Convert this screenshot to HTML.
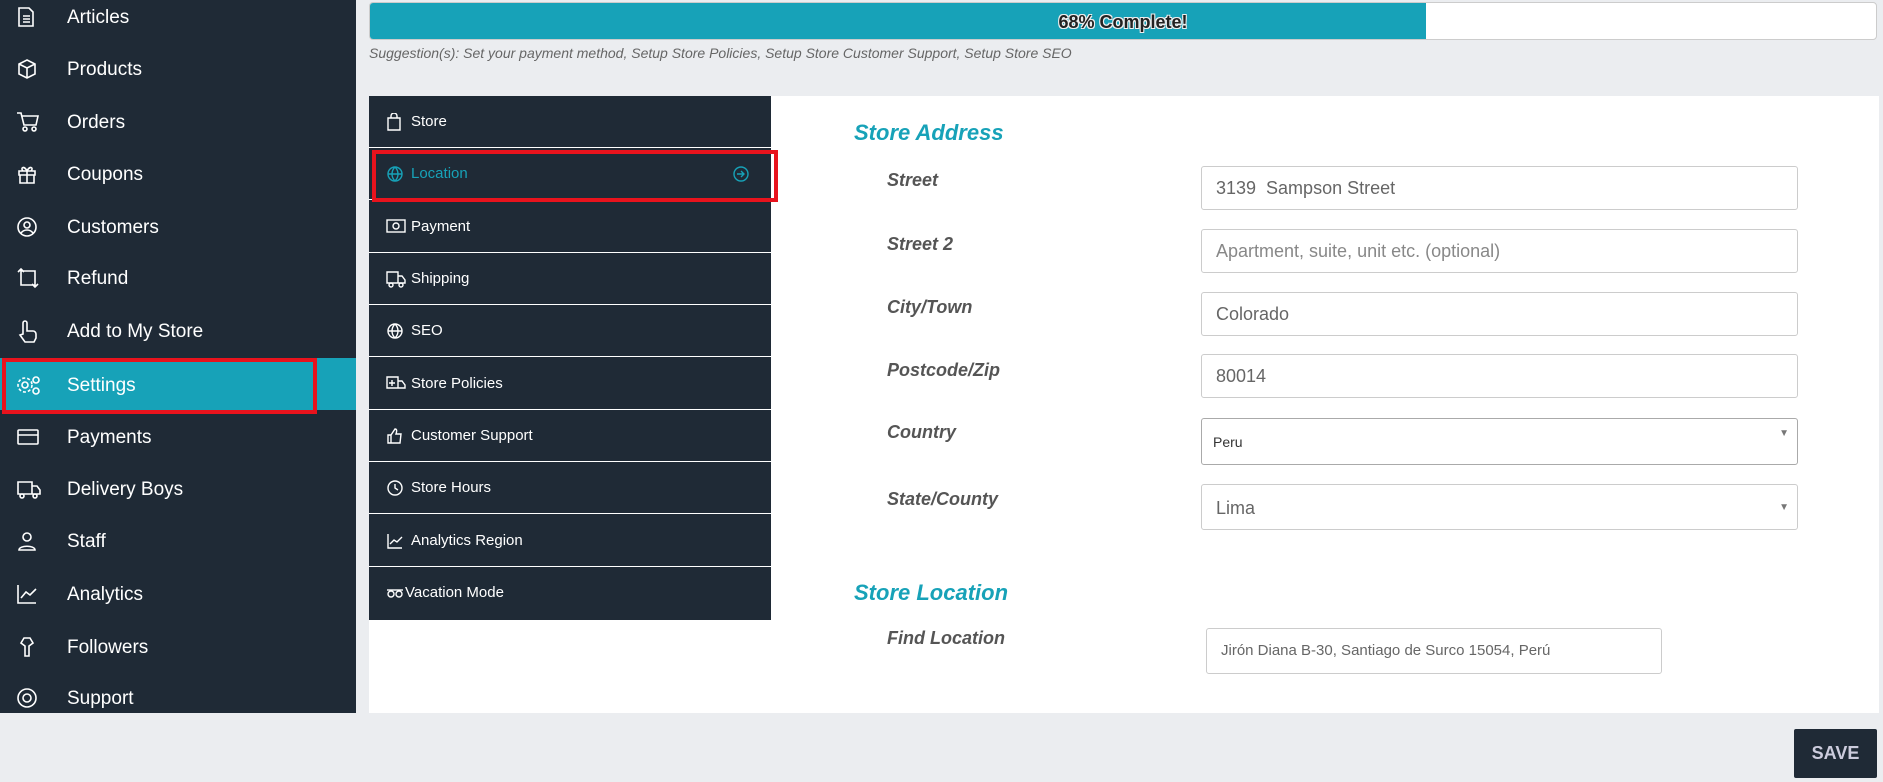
<!DOCTYPE html>
<html><head><meta charset="utf-8"><style>
*{box-sizing:border-box;margin:0;padding:0}
body{width:1883px;height:782px;background:#ebedf0;font-family:"Liberation Sans",sans-serif;position:relative;overflow:hidden}
.sb{position:absolute;left:0;top:0;width:356px;height:713px;background:#1f2a36}
.si{position:absolute;left:0;width:356px;height:52px;color:#fff;font-size:19px;line-height:52px}
.si span{position:absolute;left:67px;top:2px}
.si svg{position:absolute;left:16px;top:16px}
.act{background:#17a2b8}
.red{position:absolute;border:4px solid #e8131d}
.pb{position:absolute;left:369px;top:2px;width:1508px;height:38px;border:1px solid #ccc;border-radius:4px;background:#fff;overflow:hidden}
.pb .f{position:absolute;left:0;top:0;bottom:0;width:1056px;background:#17a2b8}
.pb .t{position:absolute;left:0;right:0;top:1px;line-height:36px;text-align:center;font-weight:bold;font-size:18px;color:#222;text-shadow:-1px -1px 0 #eee,1px -1px 0 #eee,-1px 1px 0 #eee,1px 1px 0 #eee}
.sug{position:absolute;left:369px;top:45px;font-size:14px;font-style:italic;color:#666}
.panel{position:absolute;left:369px;top:96px;width:1510px;height:617px;background:#fff}
.tabs{position:absolute;left:369px;top:96px;width:402px;height:524px;background:#1f2a36}
.tb{position:absolute;left:0;width:402px;height:52px;border-bottom:1px solid #fff;color:#fff;font-size:15px;line-height:52px}
.tb span{position:absolute;left:42px}
.tb svg{position:absolute;left:17px;top:17px}
h3{position:absolute;left:854px;font-size:22px;font-style:italic;font-weight:bold;color:#17a2b8}
.lb{position:absolute;left:887px;font-size:18px;font-style:italic;font-weight:bold;color:#555}
.in{position:absolute;left:1201px;width:597px;height:44px;border:1px solid #ccc;border-radius:3px;font-size:18px;color:#666;padding-left:14px;line-height:42px}
.arr{position:absolute;right:8px;top:0;font-size:10px;color:#777}
.save{position:absolute;left:1794px;top:729px;width:83px;height:49px;background:#1f2a36;color:#ccd;font-weight:bold;font-size:18px;text-align:center;line-height:49px;border-radius:2px}
</style></head><body>
<div class="sb">
<div class="si" style="top:-10px"><svg width="20" height="22" fill="none" stroke="#fff" stroke-width="1.6"><path d="M3 2h10l4 4v14H3z M7 10h7M7 13h7M7 16h7"/></svg><span>Articles</span></div>
<div class="si" style="top:42px"><svg width="22" height="22" fill="none" stroke="#fff" stroke-width="1.6"><path d="M11 2l8 4v10l-8 4-8-4V6z M3 6l8 4 8-4M11 10v10"/></svg><span>Products</span></div>
<div class="si" style="top:95px"><svg width="24" height="22" fill="none" stroke="#fff" stroke-width="1.6"><path d="M1 2h4l3 12h12l2-9H6"/><circle cx="9" cy="18" r="2"/><circle cx="18" cy="18" r="2"/></svg><span>Orders</span></div>
<div class="si" style="top:147px"><svg width="22" height="22" fill="none" stroke="#fff" stroke-width="1.6"><path d="M3 8h16v4H3zM4 12h14v8H4zM11 8v12M11 8c-3-6-7-3-4 0M11 8c3-6 7-3 4 0"/></svg><span>Coupons</span></div>
<div class="si" style="top:200px"><svg width="22" height="22" fill="none" stroke="#fff" stroke-width="1.6"><circle cx="11" cy="11" r="9"/><circle cx="11" cy="9" r="3"/><path d="M5 17c3-4 9-4 12 0"/></svg><span>Customers</span></div>
<div class="si" style="top:251px"><svg width="24" height="22" fill="none" stroke="#fff" stroke-width="1.6"><path d="M5 2v16h14M2 5l3-3 3 3M19 20V4H5M16 17l3 3 3-3"/></svg><span>Refund</span></div>
<div class="si" style="top:304px"><svg width="22" height="24" fill="none" stroke="#fff" stroke-width="1.6"><path d="M7 12V3a2 2 0 014 0v8h6a3 3 0 013 3v4l-2 4H9l-5-7 3-1z"/></svg><span>Add to My Store</span></div>
<div class="si act" style="top:358px"><svg width="26" height="22" fill="none" stroke="#fff" stroke-width="1.6"><circle cx="9" cy="11" r="3"/><circle cx="9" cy="11" r="7" stroke-dasharray="3 2"/><circle cx="20" cy="6" r="3"/><circle cx="20" cy="17" r="3"/></svg><span>Settings</span></div>
<div class="si" style="top:410px"><svg width="24" height="22" fill="none" stroke="#fff" stroke-width="1.6"><rect x="2" y="4" width="20" height="14" rx="1"/><path d="M2 9h20"/></svg><span>Payments</span></div>
<div class="si" style="top:462px"><svg width="26" height="22" fill="none" stroke="#fff" stroke-width="1.6"><path d="M2 4h14v12H2zM16 8h5l3 4v4h-8"/><circle cx="6" cy="18" r="2"/><circle cx="19" cy="18" r="2"/></svg><span>Delivery Boys</span></div>
<div class="si" style="top:514px"><svg width="22" height="22" fill="none" stroke="#fff" stroke-width="1.6"><circle cx="11" cy="7" r="4"/><path d="M3 20c0-5 16-5 16 0z"/></svg><span>Staff</span></div>
<div class="si" style="top:567px"><svg width="22" height="22" fill="none" stroke="#fff" stroke-width="1.6"><path d="M2 2v18h18M5 15l5-6 4 3 6-6"/></svg><span>Analytics</span></div>
<div class="si" style="top:620px"><svg width="22" height="22" fill="none" stroke="#fff" stroke-width="1.6"><path d="M8 2h6l3 5-4 3v10H9V10L5 7z"/></svg><span>Followers</span></div>
<div class="si" style="top:671px"><svg width="22" height="22" fill="none" stroke="#fff" stroke-width="1.6"><circle cx="11" cy="11" r="9"/><circle cx="11" cy="11" r="4"/></svg><span>Support</span></div>
</div>
<div class="red" style="left:2px;top:358px;width:315px;height:56px"></div>
<div class="pb"><div class="f"></div><div class="t">68% Complete!</div></div>
<div class="sug">Suggestion(s): Set your payment method, Setup Store Policies, Setup Store Customer Support, Setup Store SEO</div>
<div class="panel"></div>
<div class="tabs">
<div class="tb" style="top:0"><svg width="16" height="18" fill="none" stroke="#fff" stroke-width="1.4"><path d="M2 5h12v12H2zM5 5V3a3 3 0 016 0v2"/></svg><span>Store</span></div>
<div class="tb" style="top:52px;color:#17a2b8"><svg width="18" height="18" fill="none" stroke="#17a2b8" stroke-width="1.4"><circle cx="9" cy="9" r="7"/><path d="M2 9h14M9 2c-4 4-4 10 0 14M9 2c4 4 4 10 0 14"/></svg><span>Location</span><svg style="left:363px" width="18" height="18" fill="none" stroke="#17a2b8" stroke-width="1.4"><circle cx="9" cy="9" r="7"/><path d="M5 9h7M9 6l3 3-3 3"/></svg></div>
<div class="tb" style="top:105px"><svg width="20" height="16" fill="none" stroke="#fff" stroke-width="1.4"><rect x="1" y="2" width="18" height="12"/><circle cx="10" cy="8" r="3"/></svg><span>Payment</span></div>
<div class="tb" style="top:157px"><svg width="20" height="18" fill="none" stroke="#fff" stroke-width="1.4"><path d="M1 2h11v11H1zM12 6h4l3 4v3h-7"/><circle cx="5" cy="15" r="2"/><circle cx="15" cy="15" r="2"/></svg><span>Shipping</span></div>
<div class="tb" style="top:209px"><svg width="18" height="18" fill="none" stroke="#fff" stroke-width="1.4"><circle cx="9" cy="9" r="7"/><path d="M2 9h14M9 2c-4 4-4 10 0 14M9 2c4 4 4 10 0 14"/></svg><span>SEO</span></div>
<div class="tb" style="top:262px"><svg width="20" height="18" fill="none" stroke="#fff" stroke-width="1.4"><path d="M1 2h11v11H1zM12 6h4l3 4v3h-7M6 5v6M3 8h6"/></svg><span>Store Policies</span></div>
<div class="tb" style="top:314px"><svg width="18" height="18" fill="none" stroke="#fff" stroke-width="1.4"><path d="M2 8h3v8H2zM5 8l4-6c2 0 2 2 1 5h5l-1 9H5"/></svg><span>Customer Support</span></div>
<div class="tb" style="top:366px"><svg width="18" height="18" fill="none" stroke="#fff" stroke-width="1.4"><circle cx="9" cy="9" r="7"/><path d="M9 5v4l3 2"/></svg><span>Store Hours</span></div>
<div class="tb" style="top:419px"><svg width="18" height="18" fill="none" stroke="#fff" stroke-width="1.4"><path d="M2 2v14h14M4 12l4-4 3 2 5-5"/></svg><span>Analytics Region</span></div>
<div class="tb" style="top:471px;border-bottom:0"><svg width="18" height="18" fill="none" stroke="#fff" stroke-width="1.4"><circle cx="5" cy="10" r="3"/><circle cx="13" cy="10" r="3"/><path d="M1 6h16"/></svg><span style="left:36px">Vacation Mode</span></div>
</div>
<div class="red" style="left:372px;top:150px;width:406px;height:52px"></div>
<h3 style="top:120px">Store Address</h3>
<div class="lb" style="top:170px">Street</div>
<div class="lb" style="top:234px">Street 2</div>
<div class="lb" style="top:297px">City/Town</div>
<div class="lb" style="top:360px">Postcode/Zip</div>
<div class="lb" style="top:422px">Country</div>
<div class="lb" style="top:489px">State/County</div>
<div class="in" style="top:166px">3139&nbsp; Sampson Street</div>
<div class="in" style="top:229px;color:#888">Apartment, suite, unit etc. (optional)</div>
<div class="in" style="top:292px">Colorado</div>
<div class="in" style="top:354px">80014</div>
<div class="in" style="top:418px;height:47px;border-color:#aaa;font-size:14px;padding-left:11px;line-height:47px;color:#333">Peru<span class="arr" style="line-height:30px">▼</span></div>
<div class="in" style="top:484px;height:46px;line-height:46px">Lima<span class="arr" style="line-height:46px">▼</span></div>
<h3 style="top:580px">Store Location</h3>
<div class="lb" style="top:628px">Find Location</div>
<div class="in" style="left:1206px;top:628px;width:456px;height:46px;font-size:15px;line-height:44px">Jirón Diana B-30, Santiago de Surco 15054, Perú</div>
<div class="save">SAVE</div>
</body></html>
